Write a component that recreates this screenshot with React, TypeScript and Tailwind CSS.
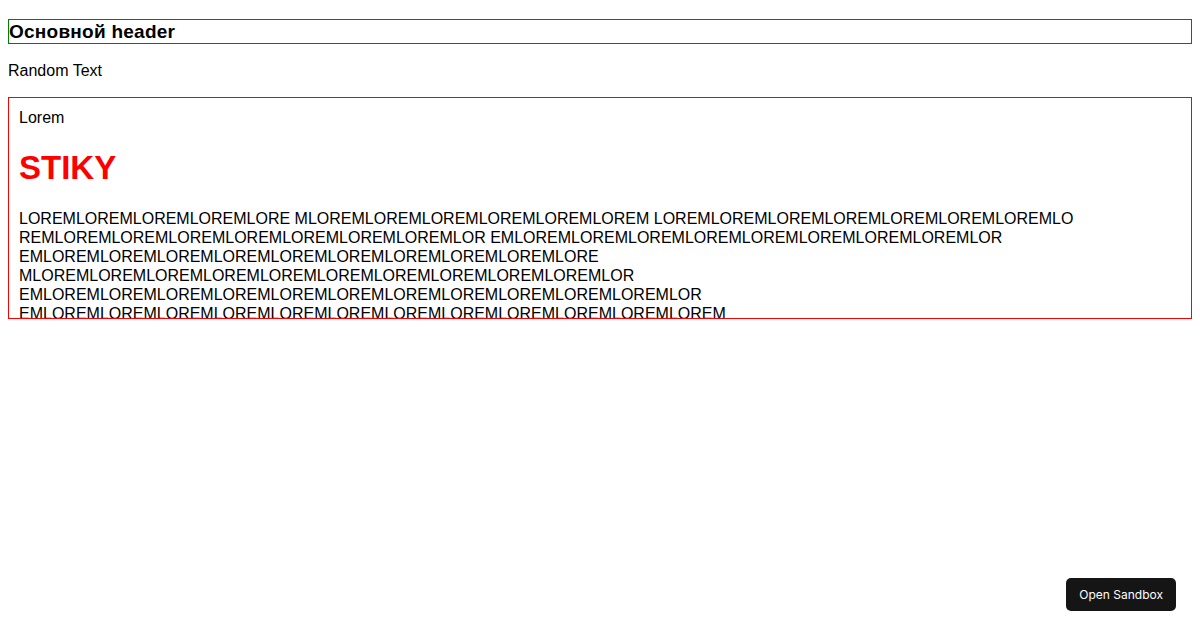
const L = (n: number) => "LOREM".repeat(n);

// each "word" grows a little, the spaces fall where the original text had them
const loremText = [
  L(4) + "LORE",
  "M" + L(6),
  L(7) + "LO",
  "REM" + L(7) + "LOR",
  "EM" + L(8) + "LOR",
  "EM" + L(9) + "LORE",
  "M" + L(10) + "LOR",
  "EM" + L(11) + "LOR",
  "EM" + L(12),
  L(13) + "LOR",
].join(" ");

export default function App() {
  return (
    <div className="relative min-h-[630px] bg-white text-black font-['Liberation_Sans',Arial,sans-serif]">
      <div className="m-2 pt-px -mt-px">
        <h3 className="mt-[18.72px] mb-[18.72px] border border-[#008000] text-[19px] font-bold leading-[23px] tracking-[0.25px]">
          Основной header
        </h3>
        <p className="my-4 text-base leading-[18.4px]">Random Text</p>
        <div className="h-[222px] overflow-hidden border border-[#ff0000] p-[10px] text-base leading-[19px]">
          Lorem
          <h1 className="my-[22px] text-[33px] font-bold leading-[38px] text-[#ff0000]">STIKY</h1>
          <p>{loremText}</p>
        </div>
      </div>

      <button className="fixed right-6 bottom-[19px] h-[33px] rounded-[5px] bg-[#151515] px-[13px] text-[12px] text-white font-['Inter',sans-serif]">
        Open Sandbox
      </button>
    </div>
  );
}
